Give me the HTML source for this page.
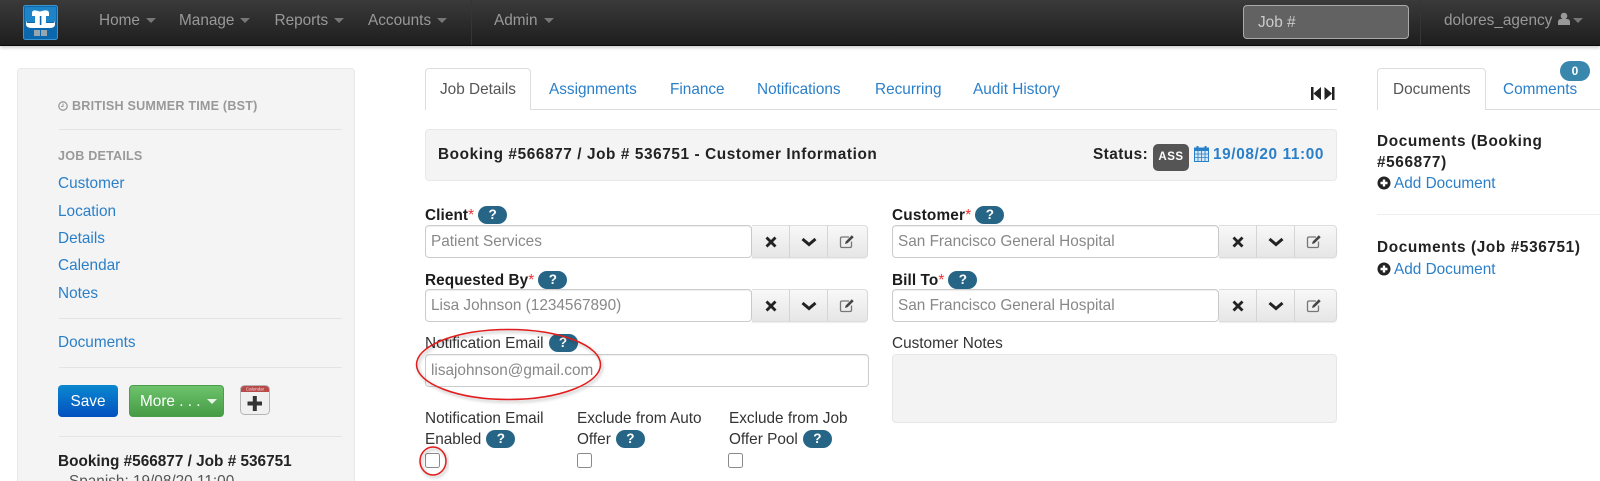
<!DOCTYPE html>
<html><head><meta charset="utf-8"><style>
html,body{margin:0;padding:0;background:#fff;width:1600px;height:481px;overflow:hidden}
body{position:relative;font:15.35px/22px "Liberation Sans",sans-serif;color:#333}
#w{position:absolute;left:0;top:0;width:1600px;height:481px;overflow:hidden}
.a{position:absolute;white-space:nowrap}
.t{position:absolute;white-space:nowrap;height:22px;line-height:22px;margin-top:1px}
a,.l{color:#2a7fc9}
.n{color:#999;top:8.5px}
.car{display:inline-block;width:0;height:0;border-left:5px solid transparent;border-right:5px solid transparent;border-top:5px solid #777;vertical-align:middle;margin-left:6px}
.hr{position:absolute;height:1px;background:#e4e4e4}
.b{font-weight:bold;color:#222;letter-spacing:.6px}
.f{letter-spacing:.08px;color:#1c1c1c}
.q{display:inline-block;width:29px;height:18px;border-radius:9px;background:#266586;color:#fff;font:bold 13.5px/18px "Liberation Sans",sans-serif;text-align:center;vertical-align:1px;margin-left:4px;letter-spacing:0}
.r{color:#e33;font-weight:normal}
.in{position:absolute;box-sizing:border-box;background:#fff;border:1px solid #ccc;border-radius:4px;height:33px;line-height:31px;padding-left:5px;color:#888;box-shadow:inset 0 1px 1px rgba(0,0,0,.07)}
.btn{position:absolute;box-sizing:border-box;height:33px;width:38px;background:linear-gradient(#f8f8f8,#e6e6e6);border:1px solid #ddd;border-left:0;border-right-color:#d8d8d8;box-shadow:0 1px 1px rgba(0,0,0,.08)}
.btn svg{position:absolute;left:10px;top:7px}
.cb{position:absolute;box-sizing:border-box;width:15px;height:15px;border:1px solid #8a8a8a;border-radius:2.5px;background:#fff}
.lbl{color:#333}
.hd{font:bold 12.6px/22px 'Liberation Sans',sans-serif;color:#999;letter-spacing:.2px}
</style></head><body><div id="w">
<svg width="0" height="0" style="position:absolute"><defs>
<path id="ix" d="M3.500 5.500L5.500 3.500 9 7 12.500 3.500 14.500 5.500 11 9 14.500 12.500 12.500 14.500 9 11 5.500 14.500 3.500 12.500 7 9z" fill="#222"/>
<path id="iv" d="M2.500 6L9 11.500l6.500-5.500" fill="none" stroke="#222" stroke-width="3"/>
<g id="ie"><path d="M13.500 8.500V13q0 1.500-1.500 1.500H4Q2.500 14.500 2.500 13V5.500Q2.500 4 4 4h7" fill="none" stroke="#777" stroke-width="1.300"/><path d="M7 11l.7-2.500L13.800 2.300l1.900 1.900L9.500 10.300z" fill="#444"/></g>
</defs></svg>
<!-- navbar -->
<div class="a" style="left:0;top:0;width:1600px;height:45px;background:linear-gradient(#3a3a3a,#1e1e1e);border-bottom:1px solid #0a0a0a;box-shadow:0 2px 3px rgba(0,0,0,.18)"></div>
<svg class="a" style="left:23px;top:5px" width="35" height="35" viewBox="0 0 35 35"><rect x=".5" y=".5" width="34" height="34" rx="2" fill="#0c68ad" stroke="#3b95d3"/><rect x="2" y="2" width="31" height="15" fill="#1f83c8"/><rect x="11" y="25" width="6" height="6" fill="#9aa6ae"/><rect x="18" y="25" width="6" height="6" fill="#9aa6ae"/><path d="M9 8Q9 5 13 5.500L17 6.500 21 5.500Q26 5 26 8V11H23V18H31L32 16V20Q31 23 27 23H9Q4 23 3 20V16L4 18H12V11H9z" fill="#fff"/><rect x="16.800" y="11" width="1.600" height="9" fill="#0c68ad"/></svg>
<div class="t n" style="left:99px">Home<span class="car"></span></div>
<div class="t n" style="left:179px">Manage<span class="car"></span></div>
<div class="t n" style="left:274.500px">Reports<span class="car"></span></div>
<div class="t n" style="left:368px">Accounts<span class="car"></span></div>
<div class="a" style="left:471px;top:0;width:1px;height:45px;background:#353535"></div>
<div class="t n" style="left:494px">Admin<span class="car"></span></div>
<div class="a" style="left:1243px;top:5px;box-sizing:border-box;width:166px;height:34px;background:#626262;border:1px solid #aaa;border-radius:4px;color:#ccc;line-height:34px;padding-left:14px">Job #</div>
<div class="a" style="left:1420px;top:0;width:1px;height:45px;background:#353535"></div>
<div class="t n" style="left:1444px">dolores_agency <svg width="14" height="14" viewBox="0 0 14 14" style="vertical-align:-1px"><circle cx="7" cy="4" r="3.300" fill="#999"/><path d="M1 13V10q0-3 3-3h6q3 0 3 3v3z" fill="#999"/></svg><span class="car" style="margin-left:2px"></span></div>

<!-- left panel -->
<div class="a" style="left:17px;top:68px;box-sizing:border-box;width:338px;height:425px;background:#f4f4f4;border:1px solid #e8e8e8;border-radius:4px"></div>
<svg class="a" style="left:58px;top:101px" width="10" height="10" viewBox="0 0 10 10"><circle cx="5" cy="5" r="4.200" fill="none" stroke="#999" stroke-width="1.300"/><path d="M5 2.500V5.500H3" fill="none" stroke="#999"/></svg>
<div class="t hd" style="left:72px;top:94px">BRITISH SUMMER TIME (BST)</div>
<div class="hr" style="left:59px;top:129px;width:283px"></div>
<div class="t hd" style="left:58px;top:144px">JOB DETAILS</div>
<div class="t l" style="left:58px;top:172px">Customer</div>
<div class="t l" style="left:58px;top:200px">Location</div>
<div class="t l" style="left:58px;top:227px">Details</div>
<div class="t l" style="left:58px;top:254px">Calendar</div>
<div class="t l" style="left:58px;top:282px">Notes</div>
<div class="hr" style="left:59px;top:318px;width:283px"></div>
<div class="t l" style="left:58px;top:331px">Documents</div>
<div class="hr" style="left:59px;top:367px;width:283px"></div>
<div class="a" style="left:58px;top:385px;width:60px;height:32px;border-radius:4px;background:linear-gradient(#0a88cf,#0450c0);color:#fff;text-align:center;line-height:33px">Save</div>
<div class="a" style="left:129px;top:385px;box-sizing:border-box;width:95px;height:32px;border-radius:4px;background:linear-gradient(#6cc36c,#459c45);border:1px solid #4a9e4a;color:#fff;line-height:31px;padding-left:10px">More . . .<span class="car" style="border-top-color:#e8f5e8;margin-left:6px;vertical-align:2px"></span></div>
<svg class="a" style="left:240px;top:385px" width="30" height="32" viewBox="0 0 30 32"><rect x=".5" y=".5" width="29" height="29" rx="4" fill="#f0f0f0" stroke="#b5b5b5"/><path d="M1 7V4.500Q1 1 4.500 1h21Q29 1 29 4.500V7z" fill="#b84a4a"/><text x="15" y="5.500" text-anchor="middle" font-family="Liberation Sans" font-size="4.500" fill="#f3dada">Calendar</text><rect x="12.800" y="11" width="4" height="15" fill="#333"/><rect x="7.500" y="16.500" width="14.500" height="4" fill="#333"/></svg>
<div class="hr" style="left:59px;top:436px;width:283px"></div>
<div class="t b" style="left:58px;top:450px;letter-spacing:0">Booking #566877 / Job # 536751</div>
<div class="t" style="left:69px;top:470px;color:#555">Spanish: 19/08/20 11:00</div>

<!-- tabs -->
<div class="a" style="left:425px;top:109px;width:912px;height:1px;background:#ddd"></div>
<div class="a" style="left:425px;top:68px;box-sizing:border-box;width:106px;height:42px;background:#fff;border:1px solid #ddd;border-bottom:0;border-radius:4px 4px 0 0"></div>
<div class="t" style="left:440px;top:78px;color:#555">Job Details</div>
<div class="t l" style="left:549px;top:78px">Assignments</div>
<div class="t l" style="left:670px;top:78px">Finance</div>
<div class="t l" style="left:757px;top:78px">Notifications</div>
<div class="t l" style="left:875px;top:78px">Recurring</div>
<div class="t l" style="left:973px;top:78px">Audit History</div>
<svg class="a" style="left:1311px;top:87px" width="24" height="13" viewBox="0 0 24 13"><path d="M0 0h2.500v13H0zM2.500 6.500L10 0v13zM23.500 0H21v13h2.500zM21 6.500L13.500 0v13z" fill="#222"/></svg>

<!-- heading box -->
<div class="a" style="left:425px;top:129px;box-sizing:border-box;width:912px;height:52px;background:#f4f4f4;border:1px solid #e8e8e8;border-radius:4px"></div>
<div class="t b" style="left:438px;top:143px;color:#222">Booking #566877 / Job # 536751 - Customer Information</div>
<div class="t b" style="left:1093px;top:143px;letter-spacing:.45px">Status:</div>
<div class="a" style="left:1153px;top:144px;width:36px;height:27px;background:#555;border-radius:5px;color:#fff;font:bold 11.500px/27px 'Liberation Sans',sans-serif;text-align:center;letter-spacing:.5px">ASS</div>
<svg class="a" style="left:1194px;top:145px" width="15" height="17" viewBox="0 0 15 17"><path d="M.5 3h14v13.500H.5z" fill="#d6e7f5" stroke="#2a7fc9"/><path d="M.5 3h14v3H.5z" fill="#2a7fc9"/><path d="M3.500 1v3M11.500 1v3" stroke="#2a7fc9" stroke-width="2"/><path d="M4 6v10M7.500 6v10M11 6v10M1 9h13M1 12.500h13" stroke="#2a7fc9" stroke-width=".8"/></svg>
<div class="t b" style="left:1213px;top:143px;color:#2a7fc9;letter-spacing:.62px">19/08/20 11:00</div>

<!-- left form col -->
<div class="t b f" style="left:425px;top:204px">Client<span class="r">*</span><span class="q">?</span></div>
<div class="in" style="left:425px;top:225px;width:327px">Patient Services</div>
<div class="btn" style="left:752px;top:225px"><svg width="18" height="18" viewBox="0 0 18 18"><use href="#ix"/></svg></div>
<div class="btn" style="left:790px;top:225px"><svg width="18" height="18" viewBox="0 0 18 18"><use href="#iv"/></svg></div>
<div class="btn" style="left:828px;top:225px;width:40px;border-radius:0 4px 4px 0"><svg width="18" height="18" viewBox="0 0 18 18"><use href="#ie"/></svg></div>

<div class="t b f" style="left:425px;top:269px">Requested By<span class="r">*</span><span class="q">?</span></div>
<div class="in" style="left:425px;top:289px;width:327px">Lisa Johnson (1234567890)</div>
<div class="btn" style="left:752px;top:289px"><svg width="18" height="18" viewBox="0 0 18 18"><use href="#ix"/></svg></div>
<div class="btn" style="left:790px;top:289px"><svg width="18" height="18" viewBox="0 0 18 18"><use href="#iv"/></svg></div>
<div class="btn" style="left:828px;top:289px;width:40px;border-radius:0 4px 4px 0"><svg width="18" height="18" viewBox="0 0 18 18"><use href="#ie"/></svg></div>

<div class="t lbl" style="left:425px;top:332px">Notification Email<span class="q" style="margin-left:5px">?</span></div>
<div class="in" style="left:425px;top:354px;width:444px">lisajohnson@gmail.com</div>

<div class="t lbl" style="left:425px;top:407px">Notification Email</div>
<div class="t lbl" style="left:425px;top:428px">Enabled<span class="q" style="margin-left:5px">?</span></div>
<div class="cb" style="left:425px;top:453px"></div>
<div class="t lbl" style="left:577px;top:407px">Exclude from Auto</div>
<div class="t lbl" style="left:577px;top:428px">Offer<span class="q" style="margin-left:5px">?</span></div>
<div class="cb" style="left:577px;top:453px"></div>
<div class="t lbl" style="left:729px;top:407px">Exclude from Job</div>
<div class="t lbl" style="left:729px;top:428px">Offer Pool<span class="q" style="margin-left:5px">?</span></div>
<div class="cb" style="left:728px;top:453px"></div>

<!-- right form col -->
<div class="t b f" style="left:892px;top:204px;letter-spacing:.2px">Customer<span class="r">*</span><span class="q">?</span></div>
<div class="in" style="left:892px;top:225px;width:327px">San Francisco General Hospital</div>
<div class="btn" style="left:1219px;top:225px"><svg width="18" height="18" viewBox="0 0 18 18"><use href="#ix"/></svg></div>
<div class="btn" style="left:1257px;top:225px"><svg width="18" height="18" viewBox="0 0 18 18"><use href="#iv"/></svg></div>
<div class="btn" style="left:1295px;top:225px;width:42px;border-radius:0 4px 4px 0"><svg width="18" height="18" viewBox="0 0 18 18"><use href="#ie"/></svg></div>

<div class="t b f" style="left:892px;top:269px">Bill To<span class="r">*</span><span class="q">?</span></div>
<div class="in" style="left:892px;top:289px;width:327px">San Francisco General Hospital</div>
<div class="btn" style="left:1219px;top:289px"><svg width="18" height="18" viewBox="0 0 18 18"><use href="#ix"/></svg></div>
<div class="btn" style="left:1257px;top:289px"><svg width="18" height="18" viewBox="0 0 18 18"><use href="#iv"/></svg></div>
<div class="btn" style="left:1295px;top:289px;width:42px;border-radius:0 4px 4px 0"><svg width="18" height="18" viewBox="0 0 18 18"><use href="#ie"/></svg></div>

<div class="t lbl" style="left:892px;top:332px">Customer Notes</div>
<div class="a" style="left:892px;top:354px;box-sizing:border-box;width:445px;height:69px;background:#f3f3f3;border:1px solid #e6e6e6;border-radius:4px"></div>

<!-- right sidebar -->
<div class="a" style="left:1377px;top:109px;width:223px;height:1px;background:#ddd"></div>
<div class="a" style="left:1377px;top:68px;box-sizing:border-box;width:109px;height:42px;background:#fff;border:1px solid #ddd;border-bottom:0;border-radius:4px 4px 0 0"></div>
<div class="t" style="left:1393px;top:78px;color:#555">Documents</div>
<div class="t l" style="left:1503px;top:78px">Comments</div>
<div class="a" style="left:1560px;top:61px;width:30px;height:20px;border-radius:10px;background:#3a87ad;color:#fff;font:bold 12px/20px 'Liberation Sans',sans-serif;text-align:center">0</div>
<div class="t b" style="left:1377px;top:130px;letter-spacing:.62px">Documents (Booking</div>
<div class="t b" style="left:1377px;top:151px;letter-spacing:.62px">#566877)</div>
<svg class="a" style="left:1377px;top:176px" width="14" height="14" viewBox="0 0 14 14"><circle cx="7" cy="7" r="6.500" fill="#222"/><path d="M3.500 7h7M7 3.500v7" stroke="#fff" stroke-width="2.400"/></svg>
<div class="t l" style="left:1394px;top:172px">Add Document</div>
<div class="hr" style="left:1377px;top:214px;width:223px;background:#eee"></div>
<div class="t b" style="left:1377px;top:236px;letter-spacing:.62px">Documents (Job #536751)</div>
<svg class="a" style="left:1377px;top:262px" width="14" height="14" viewBox="0 0 14 14"><circle cx="7" cy="7" r="6.500" fill="#222"/><path d="M3.500 7h7M7 3.500v7" stroke="#fff" stroke-width="2.400"/></svg>
<div class="t l" style="left:1394px;top:258px">Add Document</div>

<!-- annotations -->
<svg class="a" style="left:0;top:0;pointer-events:none" width="1600" height="481">
<defs><filter id="s" x="-10%" y="-10%" width="120%" height="130%"><feDropShadow dx="1.500" dy="2" stdDeviation="1.500" flood-color="#000" flood-opacity=".3"/></filter></defs>
<ellipse cx="508.500" cy="364.500" rx="92" ry="35" fill="none" stroke="#e01a1a" stroke-width="1.500" filter="url(#s)"/>
<ellipse cx="433" cy="461" rx="13" ry="14" fill="none" stroke="#e01a1a" stroke-width="1.500" filter="url(#s)"/>
</svg>
</div></body></html>
